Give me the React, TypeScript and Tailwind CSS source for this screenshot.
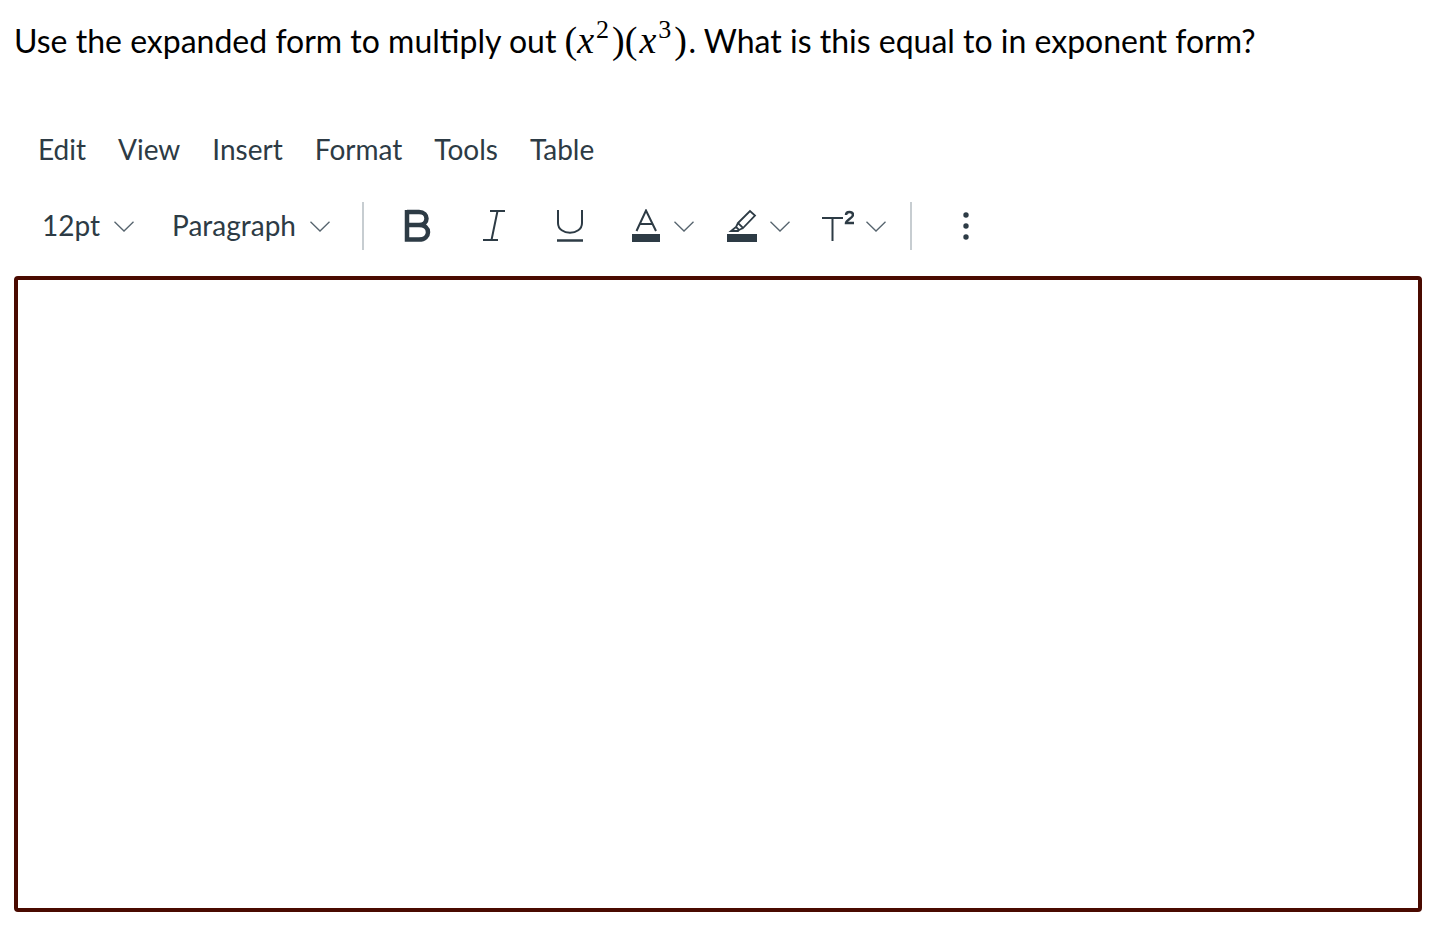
const menus = ['Edit', 'View', 'Insert', 'Format', 'Tools', 'Table']

function Chevron({ className = '' }: { className?: string }) {
  return (
    <svg width="20" height="11" viewBox="0 0 20 11" fill="none" stroke="#56646e" strokeWidth="1.3" className={`shrink-0 ${className}`}>
      <path d="M0.5 0.7 L10 10 L19.5 0.7" />
    </svg>
  )
}

function Icon({ width, className = '', children }: { width: number; className?: string; children: React.ReactNode }) {
  return (
    <svg width={width} height="34" viewBox={`0 0 ${width} 34`} fill="none" stroke="#2d3b45" className={`shrink-0 ${className}`}>
      {children}
    </svg>
  )
}

function Divider({ className = '' }: { className?: string }) {
  return <div className={`h-12 w-0.5 shrink-0 bg-[#c7cdd1] ${className}`} />
}

export default function App() {
  return (
    <div className="min-h-screen bg-white font-['Lato',sans-serif] text-black">
      <div className="flex h-[276px] flex-col px-[14px]">
        {/* Question */}
        <p className="mt-[18px] h-[44px] whitespace-nowrap text-[32px] leading-[44px]">
          Use the expanded form to multiply out{' '}
          <span className="font-['Liberation_Serif',serif] text-[38px]">
            (<i>x</i>
            <sup className="top-[-0.58em] ml-0.5 text-[26px]">2</sup>
            <span className="ml-[3px]">)</span>(<i className="ml-0.5">x</i>
            <sup className="top-[-0.58em] ml-0.5 text-[26px]">3</sup>
            <span className="ml-[3px] mr-[1.5px]">)</span>
          </span>
          . What is this equal to in exponent form?
        </p>

        {/* Menu bar */}
        <div className="mt-[67px] flex h-10 items-center gap-8 pl-6 text-[28px] text-[#2d3b45]">
          {menus.map((m) => (
            <span key={m}>{m}</span>
          ))}
        </div>

        {/* Toolbar */}
        <div className="mt-[33px] flex h-12 items-center text-[28px] text-[#2d3b45]">
          <span className="ml-7 pb-0.5">12pt</span>
          <Chevron className="ml-[14px]" />
          <span className="ml-[38px] pb-0.5">Paragraph</span>
          <Chevron className="ml-[14px]" />
          <Divider className="ml-8" />
          <Icon width={28} className="ml-10">
            <path strokeWidth="4.5" d="M3 3 H15 C25 3 25 16 15 16 H3 M15 16 C27 16 27 30.500 15 30.500 H3 V1" />
          </Icon>
          <Icon width={22} className="ml-[51px]">
            <path strokeWidth="2" d="M7 2 H22 M14.500 2 L8.500 31 M0 31 H15" />
          </Icon>
          <Icon width={26} className="ml-[52px]">
            <path strokeWidth="2" d="M1 1 V14 C1 27 25 27 25 14 V1" />
            <path strokeWidth="2.5" d="M0 31.500 H26" />
          </Icon>
          <Icon width={28} className="ml-[49px]">
            <path strokeWidth="2" d="M4.500 22 L14 1.500 L24 22 M7.500 15 H21" />
            <path strokeWidth="8" d="M0 29 H28" />
          </Icon>
          <Chevron className="ml-[14px]" />
          <Icon width={30} className="ml-[33px]">
            <path strokeWidth="1.8" d="M11 14 L23 2 L28 6.500 L16 19 Z M11 14 L9 18 L12 21 L16 19 M9 18 L4 22 H11 L12 21" />
            <path strokeWidth="8" d="M0 29 H30" />
          </Icon>
          <Chevron className="ml-[13px]" />
          <Icon width={32} className="ml-8">
            <path strokeWidth="2" d="M0 9 H21 M10.500 9 V32" />
            <path strokeWidth="2.500" d="M24 6 C24 2 31 2 31 6 C31 9 24 11 24 14 H32" />
          </Icon>
          <Chevron className="ml-3" />
          <Divider className="ml-6" />
          <svg width="8" height="30" viewBox="0 0 8 30" className="ml-[50px] shrink-0 fill-[#2d3b45]">
            <circle cx="4" cy="4" r="2.700" />
            <circle cx="4" cy="15" r="2.700" />
            <circle cx="4" cy="26" r="2.700" />
          </svg>
        </div>
      </div>

      {/* Editor area */}
      <div className="mx-[14px] mb-[22px] h-[636px] w-[1408px] rounded border-4 border-[#4a0a00] bg-white" />
    </div>
  )
}
